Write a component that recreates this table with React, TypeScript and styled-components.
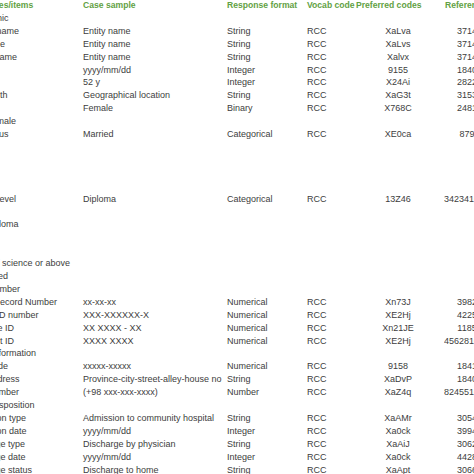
import React from 'react';
import { createGlobalStyle, styled, css } from 'styled-components';

type Align = 'left' | 'center';

interface Row {
  label: string;
  indent: number;
  sample?: string;
  format?: string;
  vocab?: string;
  preferred?: string;
  reference?: string;
}

const rows: Row[] = [
  { label: 'Demographic', indent: 0 },
  { label: 'Patient name', indent: 11, sample: 'Entity name', format: 'String', vocab: 'RCC', preferred: 'XaLva', reference: '371484003' },
  { label: 'Nickname', indent: 10, sample: 'Entity name', format: 'String', vocab: 'RCC', preferred: 'XaLvs', reference: '371485002' },
  { label: 'Father name', indent: 11, sample: 'Entity name', format: 'String', vocab: 'RCC', preferred: 'Xalvx', reference: '371486001' },
  { label: 'Birthday', indent: 10, sample: 'yyyy/mm/dd', format: 'Integer', vocab: 'RCC', preferred: '9155', reference: '184099003' },
  { label: 'Age', indent: 10, sample: '52 y', format: 'Integer', vocab: 'RCC', preferred: 'X24Ai', reference: '282265009' },
  { label: 'Place of birth', indent: 0, sample: 'Geographical location', format: 'String', vocab: 'RCC', preferred: 'XaG3t', reference: '315354004' },
  { label: 'Gender', indent: 10, sample: 'Female', format: 'Binary', vocab: 'RCC', preferred: 'X768C', reference: '248152002' },
  { label: 'Female', indent: 31 },
  { label: 'Marital status', indent: 0, sample: 'Married', format: 'Categorical', vocab: 'RCC', preferred: 'XE0ca', reference: '87915002' },
  { label: 'Single', indent: 0 },
  { label: 'Married', indent: 0 },
  { label: 'Divorced', indent: 0 },
  { label: 'Widowed', indent: 0 },
  { label: 'Education level', indent: 0, sample: 'Diploma', format: 'Categorical', vocab: 'RCC', preferred: '13Z46', reference: '342341000000105' },
  { label: 'Illiterate', indent: 0 },
  { label: 'Under diploma', indent: 5 },
  { label: 'Associate', indent: 0 },
  { label: 'Bachelor', indent: 0 },
  { label: 'Master of science or above', indent: 7 },
  { label: 'Not recorded', indent: 1 },
  { label: 'Record number', indent: 3 },
  { label: 'Medical Record Number', indent: 5, sample: 'xx-xx-xx', format: 'Numerical', vocab: 'RCC', preferred: 'Xn73J', reference: '398225001' },
  { label: 'National ID number', indent: 6, sample: 'XXX-XXXXXX-X', format: 'Numerical', vocab: 'RCC', preferred: 'XE2Hj', reference: '422549004' },
  { label: 'Insurance ID', indent: 8, sample: 'XX XXXX - XX', format: 'Numerical', vocab: 'RCC', preferred: 'Xn21JE', reference: '118522005' },
  { label: 'Passport ID', indent: 12, sample: 'XXXX XXXX', format: 'Numerical', vocab: 'RCC', preferred: 'XE2Hj', reference: '456281000000104' },
  { label: 'Contact information', indent: 3 },
  { label: 'Postal code', indent: 6, sample: 'xxxxx-xxxxx', format: 'Numerical', vocab: 'RCC', preferred: '9158', reference: '184102003' },
  { label: 'Home address', indent: 6, sample: 'Province-city-street-alley-house no', format: 'String', vocab: 'RCC', preferred: 'XaDvP', reference: '184097001' },
  { label: 'Phone number', indent: 5, sample: '(+98 xxx-xxx-xxxx)', format: 'Number', vocab: 'RCC', preferred: 'XaZ4q', reference: '824551000000101' },
  { label: 'Hospital disposition', indent: 2 },
  { label: 'Admission type', indent: 10, sample: 'Admission to community hospital', format: 'String', vocab: 'RCC', preferred: 'XaAMr', reference: '305408004' },
  { label: 'Admission date', indent: 10, sample: 'yyyy/mm/dd', format: 'Integer', vocab: 'RCC', preferred: 'Xa0ck', reference: '399423000' },
  { label: 'Discharge type', indent: 10, sample: 'Discharge by physician', format: 'String', vocab: 'RCC', preferred: 'XaAiJ', reference: '306206005' },
  { label: 'Discharge date', indent: 10, sample: 'yyyy/mm/dd', format: 'Integer', vocab: 'RCC', preferred: 'Xa0ck', reference: '442864001' },
  { label: 'Discharge status', indent: 10, sample: 'Discharge to home', format: 'String', vocab: 'RCC', preferred: 'XaApt', reference: '306689006' },
];

const GlobalStyle = createGlobalStyle`
  html, body {
    margin: 0;
    padding: 0;
    background: #ffffff;
    overflow: hidden;
  }
`;

const Page = styled.div`
  width: 474px;
  height: 474px;
  overflow: hidden;
  background: #ffffff;
`;

const Table = styled.table`
  border-collapse: collapse;
  table-layout: fixed;
  width: 560px;
  margin: -1px 0 0 -45px;
  font-family: 'Liberation Sans', Arial, sans-serif;
  font-size: 9px;
  color: #3d3d3d;
`;

const cellBase = css`
  padding: 0;
  height: 12.9px;
  line-height: 12.9px;
  white-space: nowrap;
  vertical-align: middle;
`;

const HeadCell = styled.th<{ $indent?: number }>`
  ${cellBase};
  font-size: 8.6px;
  font-weight: bold;
  color: #62a143;
  text-align: left;
  overflow: visible;
  padding-left: ${(p) => p.$indent ?? 3}px;
`;

const LabelCell = styled.td<{ $indent: number }>`
  ${cellBase};
  overflow: hidden;
  padding-left: ${(p) => p.$indent}px;
`;

const Cell = styled.td<{ $align?: Align }>`
  ${cellBase};
  overflow: hidden;
  text-align: ${(p) => p.$align ?? 'left'};
  padding-left: ${(p) => (p.$align === 'center' ? 0 : 3)}px;
`;

const App: React.FC = () => {
  return (
    <Page>
      <GlobalStyle />
      <Table>
        <colgroup>
          <col style={{ width: 125 }} />
          <col style={{ width: 144 }} />
          <col style={{ width: 80 }} />
          <col style={{ width: 48 }} />
          <col style={{ width: 92 }} />
          <col style={{ width: 71 }} />
        </colgroup>
        <thead>
          <tr>
            <HeadCell $indent={9}>Categories/items</HeadCell>
            <HeadCell>Case sample</HeadCell>
            <HeadCell>Response format</HeadCell>
            <HeadCell>Vocab code</HeadCell>
            <HeadCell $indent={4}>Preferred codes</HeadCell>
            <HeadCell $indent={1}>Reference</HeadCell>
          </tr>
        </thead>
        <tbody>
          {rows.map((row, i) => (
            <tr key={i}>
              <LabelCell $indent={row.indent}>{row.label}</LabelCell>
              <Cell>{row.sample}</Cell>
              <Cell>{row.format}</Cell>
              <Cell>{row.vocab}</Cell>
              <Cell $align="center">{row.preferred}</Cell>
              <Cell $align="center">{row.reference}</Cell>
            </tr>
          ))}
        </tbody>
      </Table>
    </Page>
  );
};

export default App;
